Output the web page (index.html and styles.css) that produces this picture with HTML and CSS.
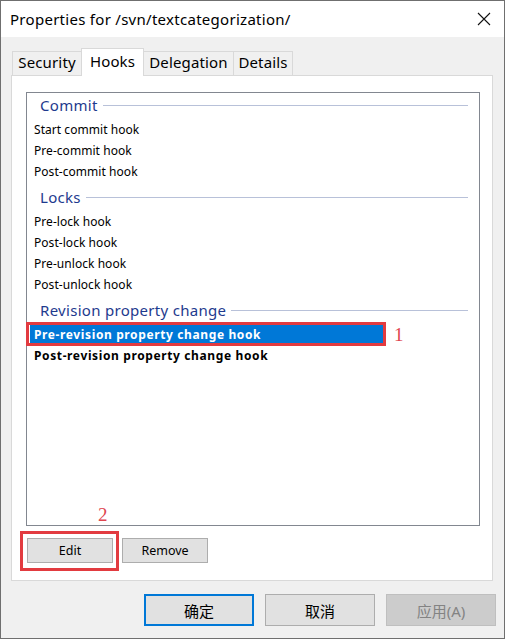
FILE: index.html
```html
<!DOCTYPE html>
<html>
<head>
<meta charset="utf-8">
<link rel="stylesheet" href="styles.css">
</head>
<body>
<div class="window">
  <div class="titlebar">
    <span class="title">Properties for /svn/textcategorization/</span>
    <svg class="close" width="14" height="14" viewBox="0 0 14 14"><path d="M1 1 L13 13 M13 1 L1 13" stroke="#111" stroke-width="1.1" fill="none"/></svg>
  </div>
  <div class="content">
    <div class="tabs">
      <div class="tab t-security">Security</div>
      <div class="tab tab-active t-hooks">Hooks</div>
      <div class="tab t-deleg">Delegation</div>
      <div class="tab t-details">Details</div>
    </div>
    <div class="panel">
      <div class="listbox">
        <div class="group first"><span class="gtext">Commit</span><span class="gline"></span></div>
        <div class="item">Start commit hook</div>
        <div class="item">Pre-commit hook</div>
        <div class="item">Post-commit hook</div>
        <div class="group"><span class="gtext">Locks</span><span class="gline"></span></div>
        <div class="item">Pre-lock hook</div>
        <div class="item">Post-lock hook</div>
        <div class="item">Pre-unlock hook</div>
        <div class="item">Post-unlock hook</div>
        <div class="group"><span class="gtext">Revision property change</span><span class="gline"></span></div>
        <div class="item bold selected">Pre-revision property change hook</div>
        <div class="item bold">Post-revision property change hook</div>
      </div>
      <div class="panel-buttons">
        <button class="btn small">Edit</button>
        <button class="btn small">Remove</button>
      </div>
    </div>
    <div class="footer">
      <button class="btn big default">确定</button>
      <button class="btn big">取消</button>
      <button class="btn big disabled">应用(A)</button>
    </div>
  </div>
  <div class="mark mark1"></div>
  <div class="mark mark2"></div>
  <div class="num num1">1</div>
  <div class="num num2">2</div>
</div>
</body>
</html>
```
FILE: styles.css
```css
* { box-sizing: border-box; }
html, body { margin: 0; padding: 0; background: #ffffff; }
body {
  font-family: "Noto Sans", "Noto Sans CJK SC", sans-serif;
  color: #000;
}
.window {
  position: relative;
  width: 505px;
  height: 639px;
  border: 1px solid #6f6f6f;
  background: #f0f0f0;
  display: flex;
  flex-direction: column;
}
.titlebar {
  height: 36px;
  background: #ffffff;
  display: flex;
  align-items: center;
  justify-content: space-between;
  padding-left: 9px;
  padding-right: 13px;
}
.title {
  font-size: 15px;
  letter-spacing: 0.28px;
}
.close { display: block; }
.content {
  flex: 1;
  display: flex;
  flex-direction: column;
  padding-top: 11px;
  padding-left: 10px;
}
.tabs {
  display: flex;
  align-items: flex-end;
  height: 27px;
  margin-left: 1px;
}
.tab {
  height: 24px;
  border: 1px solid #d9d9d9;
  border-bottom: none;
  background: #f0f0f0;
  font-size: 15px;
  line-height: 21px;
  text-align: center;
  margin-left: -1px;
  letter-spacing: 0.15px;
}
.t-security { width: 70px; margin-left: 0; }
.t-hooks { width: 63px; }
.t-deleg { width: 91px; }
.t-details { width: 60px; }
.tab-active {
  height: 28px;
  margin-bottom: -1px;
  background: #ffffff;
  position: relative;
  z-index: 1;
  line-height: 24px;
}
.panel {
  width: 482px;
  height: 506px;
  border: 1px solid #d9d9d9;
  background: #ffffff;
  padding: 16px 0 0 14px;
}
.listbox {
  width: 454px;
  height: 434px;
  border: 1px solid #828790;
  background: #fff;
}
.group {
  height: 26px;
  display: flex;
  align-items: center;
  padding-left: 13px;
  padding-right: 11px;
  margin-top: 3px;
  padding-bottom: 3px;
}
.group.first { margin-top: 0; }
.gtext {
  font-size: 15px;
  color: #1e3a8e;
  white-space: nowrap;
  letter-spacing: 0.3px;
}
.gline {
  flex: 1;
  height: 1px;
  background: #b8c1d9;
  margin-left: 5px;
  margin-top: 1px;
}
.item {
  height: 21px;
  line-height: 21px;
  font-size: 12px;
  padding-left: 7px;
  letter-spacing: 0.05px;
}
.item.bold { font-weight: bold; letter-spacing: 0.62px; }
.item.selected {
  background: #0078d7;
  color: #fff;
  margin-left: 2px;
  width: 354px;
  padding-left: 5px;
  box-shadow: inset 1px 0 0 #ffffff;
}
.panel-buttons {
  display: flex;
  gap: 9px;
  margin-top: 12px;
  padding-left: 1px;
}
.btn {
  font-family: "Noto Sans", "Noto Sans CJK SC", sans-serif;
  background: #e1e1e1;
  border: 1px solid #adadad;
  color: #000;
  padding: 0;
  margin: 0;
}
.btn.small {
  width: 86px;
  height: 25px;
  font-size: 12.5px;
}
.footer {
  display: flex;
  justify-content: flex-end;
  gap: 11px;
  margin-top: 13px;
  padding-right: 8px;
}
.btn.big {
  width: 110px;
  height: 32px;
  font-size: 15px;
}
.btn.default { border: 2px solid #0078d7; }
.btn.disabled {
  background: #cccccc;
  border-color: #bfbfbf;
  color: #838383;
}
.mark {
  position: absolute;
  border: 3px solid #e23b40;
}
.mark1 { left: 25px; top: 321px; width: 360px; height: 24px; }
.mark2 { left: 19px; top: 530px; width: 99px; height: 40px; }
.num {
  position: absolute;
  font-family: "Liberation Serif", serif;
  font-size: 19px;
  line-height: 1;
  color: #e0454f;
}
.num1 { left: 393px; top: 324px; }
.num2 { left: 97px; top: 504px; }
```
